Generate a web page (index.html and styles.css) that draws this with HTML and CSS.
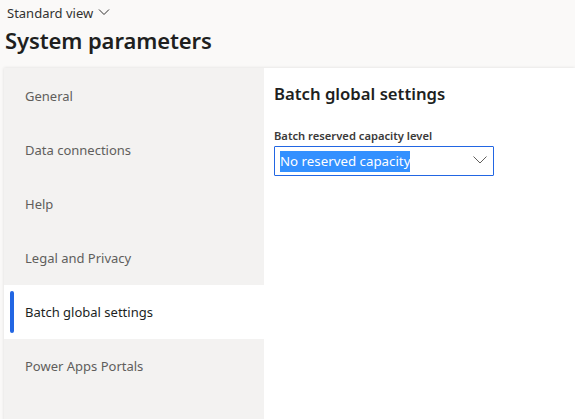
FILE: index.html
```html
<!DOCTYPE html>
<html lang="en">
<head>
<meta charset="utf-8">
<title>System parameters</title>
<link rel="stylesheet" href="styles.css">
</head>
<body>
<header class="header">
  <div class="view-switch">
    <span class="view-name">Standard view</span>
    <svg class="view-chevron" width="12" height="8" viewBox="0 0 12 8"><path d="M1 1.5 L6 6.5 L11 1.5" fill="none" stroke="#323130" stroke-width="1"/></svg>
  </div>
  <h1 class="title">System parameters</h1>
</header>
<div class="panel">
  <nav class="nav">
    <div class="nav-item">General</div>
    <div class="nav-item">Data connections</div>
    <div class="nav-item">Help</div>
    <div class="nav-item">Legal and Privacy</div>
    <div class="nav-item selected"><span class="nav-bar"></span>Batch global settings</div>
    <div class="nav-item">Power Apps Portals</div>
  </nav>
  <main class="content">
    <h2 class="section-title">Batch global settings</h2>
    <label class="field-label">Batch reserved capacity level</label>
    <div class="select">
      <span class="select-value">No reserved capacity</span>
      <svg class="select-chevron" width="14" height="8" viewBox="0 0 14 8"><path d="M0.5 0.5 L7 7 L13.5 0.5" fill="none" stroke="#605e5c" stroke-width="1"/></svg>
    </div>
  </main>
</div>
</body>
</html>
```
FILE: styles.css
```css
html, body {
  margin: 0;
  padding: 0;
  height: 100%;
}
body {
  background: #faf9f8;
  font-family: "Noto Sans", "Open Sans", sans-serif;
  color: #323130;
  overflow: hidden;
}
.header {
  padding: 3px 0 0 5px;
  height: 65px;
  box-sizing: border-box;
}
.view-switch {
  display: flex;
  align-items: center;
  gap: 5px;
  padding-left: 2px;
  height: 20px;
}
.view-name {
  font-size: 13px;
  color: #323130;
}
.view-chevron {
  margin-top: -2px;
}
.title {
  margin: 0;
  font-size: 22px;
  font-weight: 600;
  color: #201f1e;
  line-height: 34px;
  letter-spacing: -0.1px;
}
.panel {
  margin-left: 4px;
  margin-top: 3px;
  display: flex;
  height: 360px;
  background: #ffffff;
  box-shadow: 0 0 3px rgba(0,0,0,0.12);
}
.nav {
  width: 260px;
  background: #f3f2f1;
  padding-top: 1px;
  flex-shrink: 0;
}
.nav-item {
  position: relative;
  height: 54px;
  display: flex;
  align-items: center;
  padding-left: 21px;
  font-size: 13px;
  color: #605e5c;
}
.nav-item.selected {
  background: #ffffff;
  color: #201f1e;
}
.nav-bar {
  position: absolute;
  left: 6px;
  top: 6px;
  bottom: 6px;
  width: 4px;
  border-radius: 2px;
  background: #2266e3;
}
.content {
  flex: 1;
  padding: 14px 10px 0 10px;
}
.section-title {
  margin: 0;
  font-size: 16.7px;
  font-weight: 600;
  color: #201f1e;
  line-height: 24px;
}
.field-label {
  display: block;
  margin-top: 22px;
  font-size: 11.2px;
  font-weight: 600;
  color: #3b3a39;
  line-height: 16px;
}
.select {
  margin-top: 2px;
  width: 220px;
  height: 30px;
  box-sizing: border-box;
  border: 1px solid #2266e3;
  border-radius: 1px;
  display: flex;
  align-items: center;
  justify-content: space-between;
  padding: 0 5px 0 5px;
}
.select-value {
  background: #3390ff;
  color: #ffffff;
  font-size: 13.3px;
  line-height: 21px;
}
.select-chevron {
  margin-right: 1px;
  margin-top: -2px;
}
```
